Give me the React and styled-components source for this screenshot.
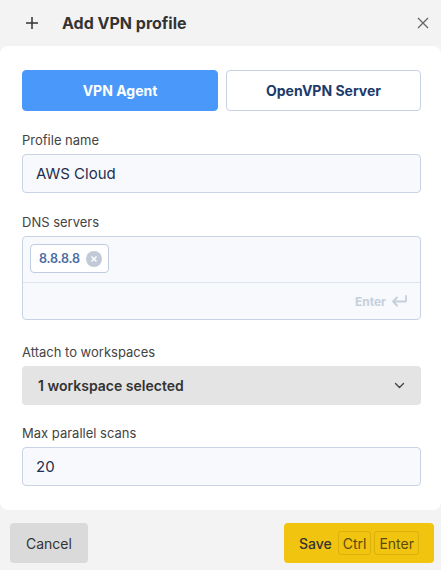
import React from 'react'
import styled, { createGlobalStyle } from 'styled-components'

const Global = createGlobalStyle`
  html, body {
    margin: 0;
    padding: 0;
    background: #f3f3f3;
    font-family: Inter, "Noto Sans", "Liberation Sans", sans-serif;
  }
  * { box-sizing: border-box; }
`

const Modal = styled.div`
  width: 441px;
  height: 570px;
  background: #f3f3f3;
  display: flex;
  flex-direction: column;
  overflow: hidden;
`

const Header = styled.div`
  height: 46px;
  display: flex;
  align-items: center;
  padding: 0 12px 0 25px;
  color: #333;
`

const Title = styled.h1`
  margin: 0 0 0 23px;
  font-size: 16px;
  font-weight: 700;
  color: #333;
  flex: 1;
`

const IconBtn = styled.span`
  display: inline-flex;
  color: ${(p) => p.color || '#333'};
`

const Panel = styled.div`
  background: #fff;
  border-radius: 8px;
  padding: 24px 20px 24px 22px;
  display: flex;
  flex-direction: column;
`

const Tabs = styled.div`
  display: grid;
  grid-template-columns: 196px 195px;
  gap: 8px;
`

const Tab = styled.button`
  height: 41px;
  border-radius: 4px;
  font-family: inherit;
  font-size: 14px;
  font-weight: 700;
  border: 1px solid ${(p) => (p.active ? '#4a99fa' : '#c7d1e4')};
  background: ${(p) => (p.active ? '#4a99fa' : '#fff')};
  color: ${(p) => (p.active ? '#fff' : '#1d3a6c')};
`

const Field = styled.div`
  margin-top: ${(p) => p.gap || 21}px;
  display: flex;
  flex-direction: column;
`

const Label = styled.label`
  font-size: 13px;
  line-height: 16px;
  color: #444;
  margin-bottom: 6px;
`

const Input = styled.div`
  height: 39px;
  border: 1px solid #c8d3e6;
  background: #f7f9fc;
  border-radius: 4px;
  display: flex;
  align-items: center;
  padding: 0 13px;
  font-size: 15px;
  color: #1f2f4f;
`

const TagBox = styled.div`
  height: 84px;
  border: 1px solid #c8d3e6;
  background: #f7f9fc;
  border-radius: 4px;
  display: flex;
  flex-direction: column;
`

const TagRow = styled.div`
  height: 46px;
  padding: 7px 7px;
  border-bottom: 1px solid #dde4ef;
`

const Chip = styled.span`
  display: inline-flex;
  align-items: center;
  gap: 6px;
  height: 29px;
  padding: 0 6px 0 8px;
  border: 1px solid #bfcbe0;
  background: #fff;
  border-radius: 4px;
  font-size: 12.5px;
  font-weight: 600;
  letter-spacing: -0.2px;
  color: #4b6ba2;
`

const ChipClose = styled.span`
  width: 16px;
  height: 16px;
  border-radius: 50%;
  background: #c2cad7;
  display: inline-flex;
  align-items: center;
  justify-content: center;
`

const EnterHint = styled.div`
  flex: 1;
  display: flex;
  align-items: center;
  justify-content: flex-end;
  gap: 5px;
  padding-right: 12px;
  font-size: 12px;
  font-weight: 700;
  color: #c6cfdc;
`

const Select = styled.div`
  height: 39px;
  background: #e4e4e4;
  border-radius: 4px;
  display: flex;
  align-items: center;
  justify-content: space-between;
  padding: 0 16px 0 16px;
  font-size: 14px;
  font-weight: 600;
  color: #333;
`

const Footer = styled.div`
  display: flex;
  justify-content: space-between;
  padding: 13px 7px 0 10px;
`

const Button = styled.button`
  height: 40px;
  border: none;
  border-radius: 4px;
  font-family: inherit;
  font-size: 14px;
  color: #333;
  display: inline-flex;
  align-items: center;
  gap: 3px;
  padding: 0 ${(p) => (p.primary ? '15px' : '16px')};
  background: ${(p) => (p.primary ? '#f1c40f' : '#dadada')};
  font-weight: ${(p) => (p.primary ? 500 : 400)};
`

const Key = styled.span`
  height: 24px;
  padding: 0 4px;
  display: inline-flex;
  align-items: center;
  border: 1px solid rgba(0, 0, 0, 0.09);
  border-radius: 3px;
  color: #5b4a10;
  font-weight: 400;
`

const SaveText = styled.span`
  margin-right: 3px;
`

export default function App() {
  return (
    <Modal>
      <Global />
      <Header>
        <IconBtn>
          <svg width="14" height="14" viewBox="0 0 14 14" fill="none" stroke="#333" strokeWidth="1.5">
            <path d="M7 1v12M1 7h12" />
          </svg>
        </IconBtn>
        <Title>Add VPN profile</Title>
        <IconBtn color="#666">
          <svg width="12" height="12" viewBox="0 0 12 12" fill="none" stroke="#666" strokeWidth="1.3">
            <path d="M1 1l10 10M11 1L1 11" />
          </svg>
        </IconBtn>
      </Header>
      <Panel>
        <Tabs>
          <Tab active>VPN Agent</Tab>
          <Tab>OpenVPN Server</Tab>
        </Tabs>
        <Field>
          <Label>Profile name</Label>
          <Input>AWS Cloud</Input>
        </Field>
        <Field>
          <Label>DNS servers</Label>
          <TagBox>
            <TagRow>
              <Chip>
                8.8.8.8
                <ChipClose>
                  <svg width="8" height="8" viewBox="0 0 8 8" stroke="#fff" strokeWidth="1.4">
                    <path d="M1.5 1.5l5 5M6.5 1.5l-5 5" />
                  </svg>
                </ChipClose>
              </Chip>
            </TagRow>
            <EnterHint>
              Enter
              <svg width="17" height="13" viewBox="0 0 17 13" fill="none" stroke="#c6cfdc" strokeWidth="1.8" strokeLinecap="round" strokeLinejoin="round">
                <path d="M15 1v5.5H2M6 2.5L2 6.5l4 4" />
              </svg>
            </EnterHint>
          </TagBox>
        </Field>
        <Field gap={24}>
          <Label>Attach to workspaces</Label>
          <Select>
            1 workspace selected
            <svg width="11" height="7" viewBox="0 0 11 7" fill="none" stroke="#444" strokeWidth="1.4" strokeLinecap="round" strokeLinejoin="round">
              <path d="M1.5 1.5l4 4 4-4" />
            </svg>
          </Select>
        </Field>
        <Field gap={20}>
          <Label>Max parallel scans</Label>
          <Input>20</Input>
        </Field>
      </Panel>
      <Footer>
        <Button>Cancel</Button>
        <Button primary>
          <SaveText>Save</SaveText>
          <Key>Ctrl</Key>
          <Key>Enter</Key>
        </Button>
      </Footer>
    </Modal>
  )
}
